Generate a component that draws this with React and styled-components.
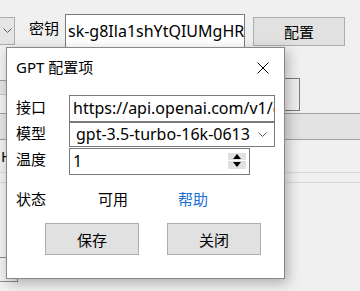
import React from 'react';
import styled, { createGlobalStyle } from 'styled-components';

const GlobalStyle = createGlobalStyle`
  body {
    margin: 0;
    background: #f0f0f0;
    font-family: 'Noto Sans', 'Noto Sans CJK SC', sans-serif;
    color: #000;
  }
`;

const Chevron = ({ size = 9 }) => (
  <svg width={size} height={size / 2 + 1} viewBox="0 0 9 5.5" fill="none">
    <path d="M0.5 0.5 L4.5 4.5 L8.5 0.5" stroke="#606060" strokeWidth="1" />
  </svg>
);

const App = () => {
  return (
    <>
      <GlobalStyle />
      <Page>
        <TopBar>
          <ComboStub><Chevron /></ComboStub>
          <TopLabel>密钥</TopLabel>
          <KeyField readOnly value="sk-g8Ila1shYtQIUMgHR9cTzXkP3m" />
          <WinButton $w={92} $h={29}>配置</WinButton>
        </TopBar>

        <SecondRow>
          <SideHeader />
          <GhostBox />
        </SecondRow>

        <ListHeader />
        <ListRow $h={33}><Cell>H</Cell></ListRow>
        <ListRow $h={10} />

        <Footer>
          <FooterButton />
        </Footer>

        <Dialog>
          <TitleBar>
            <Title>GPT 配置项</Title>
            <CloseIcon viewBox="0 0 12 12">
              <path d="M0.5 0.5 L11.5 11.5 M11.5 0.5 L0.5 11.5" stroke="#000" strokeWidth="1" />
            </CloseIcon>
          </TitleBar>

          <Form>
            <Label>接口</Label>
            <Field $w={206} $h={27}>https://api.openai.com/v1/chat/completions</Field>
            <Label>模型</Label>
            <Field $w={206} $h={25} $combo>
              <span>gpt-3.5-turbo-16k-0613</span>
              <ComboArrow><Chevron /></ComboArrow>
            </Field>
            <Label>温度</Label>
            <Field $w={181} $h={27} $spin>
              <span>1</span>
              <Spinner>
                <SpinHalf>
                  <svg width="8" height="5" viewBox="0 0 8 5"><path d="M0 5 L4 0 L8 5 Z" fill="#000" /></svg>
                </SpinHalf>
                <SpinHalf>
                  <svg width="8" height="5" viewBox="0 0 8 5"><path d="M0 0 L4 5 L8 0 Z" fill="#000" /></svg>
                </SpinHalf>
              </Spinner>
            </Field>
          </Form>

          <StatusRow>
            <span>状态</span>
            <span>可用</span>
            <HelpLink>帮助</HelpLink>
          </StatusRow>

          <ButtonRow>
            <WinButton $w={94} $h={32}>保存</WinButton>
            <WinButton $w={94} $h={32}>关闭</WinButton>
          </ButtonRow>
        </Dialog>
      </Page>
    </>
  );
};

/* --- styles --- */
const Page = styled.div`
  position: relative;
  width: 360px;
  height: 291px;
  overflow: hidden;
  background: #f0f0f0;
`;

const TopBar = styled.div`
  display: flex;
  align-items: center;
  height: 34px;
  margin-top: 14px;
`;

const ComboStub = styled.div`
  width: 16px;
  height: 28px;
  margin-left: -1px;
  box-sizing: border-box;
  border: 1px solid #adadad;
  border-left: none;
  background: #e5e5e5;
  display: flex;
  align-items: center;
  justify-content: center;
  padding-left: 1px;
`;

const TopLabel = styled.span`
  margin-left: 14px;
  width: 36px;
  font-size: 15px;
  line-height: 20px;
  margin-top: -6px;
`;

const KeyField = styled.input`
  width: 180px;
  height: 34px;
  box-sizing: border-box;
  border: 1px solid #7a7a7a;
  border-radius: 0;
  outline: none;
  margin: 0;
  background: #fff;
  font-family: inherit;
  font-size: 16px;
  color: #000;
  padding: 0 0 0 2px;
`;

const WinButton = styled.div`
  width: ${p => p.$w}px;
  height: ${p => p.$h}px;
  box-sizing: border-box;
  border: 1px solid #adadad;
  background: #e1e1e1;
  font-size: 15px;
  display: flex;
  align-items: center;
  justify-content: center;
  margin-left: 8px;
`;

const SecondRow = styled.div`
  display: flex;
  justify-content: space-between;
  margin-top: 30px;
  height: 35px;
`;

const SideHeader = styled.div`
  width: 40px;
  height: 13px;
  margin-top: 2px;
  border-top: 1px solid #a0a0a0;
  border-bottom: 1px solid #c8c8c8;
  background: #e3e3e3;
`;

const GhostBox = styled.div`
  width: 100px;
  height: 33px;
  margin-right: 60px;
  box-sizing: border-box;
  border: 1px solid #7a7a7a;
  background: #efefef;
`;

const ListHeader = styled.div`
  height: 27px;
  box-sizing: border-box;
  border-top: 1px solid #a0a0a0;
  border-bottom: 1px solid #a0a0a0;
  background: #e3e3e3;
`;

const ListRow = styled.div`
  height: ${p => p.$h}px;
  box-sizing: border-box;
  border-bottom: 1px solid #d9d9d9;
  display: flex;
  align-items: center;
`;

const Cell = styled.span`
  font-size: 15px;
  padding-left: 1px;
`;

const Footer = styled.div`
  margin-top: 74px;
`;

const FooterButton = styled.div`
  width: 19px;
  height: 25px;
  margin-left: -1px;
  box-sizing: border-box;
  border: 1px solid #8c8c8c;
  background: #f0f0f0;
`;

const Dialog = styled.div`
  position: absolute;
  left: 6px;
  top: 47px;
  width: 279px;
  height: 232px;
  box-sizing: border-box;
  background: #fff;
  border: 1px solid #888;
  box-shadow: 3px 4px 12px rgba(0, 0, 0, 0.28);
`;

const TitleBar = styled.div`
  display: flex;
  align-items: center;
  justify-content: space-between;
  height: 37px;
  padding: 0 15px 0 9px;
`;

const Title = styled.span`
  font-size: 15px;
`;

const CloseIcon = styled.svg`
  width: 12px;
  height: 12px;
  margin-top: 2px;
`;

const Form = styled.div`
  display: grid;
  grid-template-columns: 53px auto;
  margin: 10px 0 0 9px;
  align-items: center;
`;

const Label = styled.span`
  font-size: 15px;
  line-height: 20px;
  margin-top: -4px;
`;

const Field = styled.div`
  width: ${p => p.$w}px;
  height: ${p => p.$h}px;
  box-sizing: border-box;
  border: 1px solid #7a7a7a;
  background: #fff;
  font-size: 16px;
  line-height: ${p => p.$h - 2}px;
  padding-left: ${p => (p.$combo ? 6 : 3)}px;
  white-space: nowrap;
  overflow: hidden;
  display: flex;
  align-items: center;
  justify-content: space-between;
  margin-top: ${p => (p.$spin ? 1 : 0)}px;
`;

const ComboArrow = styled.span`
  display: flex;
  width: 20px;
  justify-content: center;
  margin-right: 2px;
`;

const Spinner = styled.div`
  display: flex;
  flex-direction: column;
  width: 18px;
  height: 16px;
  margin-right: 3px;
  margin-top: -2px;
  background: #e1e1e1;
`;

const SpinHalf = styled.div`
  flex: 1;
  display: flex;
  align-items: center;
  justify-content: center;
  & + & { border-top: 1px solid #fff; }
`;

const StatusRow = styled.div`
  display: grid;
  grid-template-columns: 82px 80px auto;
  margin: 14px 0 0 9px;
  font-size: 15px;
  line-height: 20px;
`;

const HelpLink = styled.span`
  color: #1a6fd6;
`;

const ButtonRow = styled.div`
  display: flex;
  gap: 20px;
  margin: 14px 0 0 30px;
`;

export default App;
